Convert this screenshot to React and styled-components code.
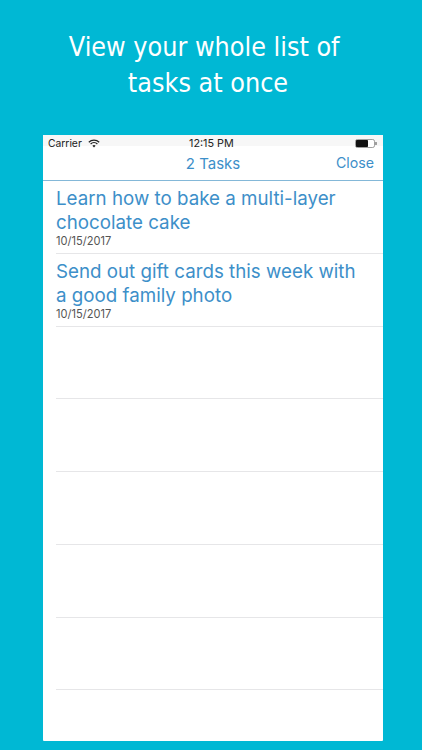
import React from "react";
import styled, { createGlobalStyle } from "styled-components";

const GlobalStyle = createGlobalStyle`
  html, body {
    margin: 0;
    padding: 0;
    background: #00b8d4;
  }
`;

const Page = styled.div`
  width: 422px;
  height: 750px;
  overflow: hidden;
  background: #00b8d4;
  display: flex;
  flex-direction: column;
`;

const Headline = styled.h1`
  margin: 0;
  padding: 29px 6px 0 0;
  height: 135px;
  box-sizing: border-box;
  width: 100%;
  flex: none;
  text-align: center;
  color: #fff;
  font-family: "DejaVu Sans Condensed", "DejaVu Sans", sans-serif;
  font-stretch: condensed;
  font-weight: 400;
  font-size: 26.7px;
  line-height: 36px;
  white-space: pre;
`;

const Phone = styled.div`
  width: 340px;
  height: 606px;
  margin-left: 43px;
  border-radius: 1px;
  background: #fff;
  display: flex;
  flex-direction: column;
  font-family: "Inter", sans-serif;
`;

const StatusBar = styled.div`
  height: 11px;
  flex: none;
  background: #f7f7f7;
  position: relative;
  color: #222;
  font-size: 10.3px;
`;

const Carrier = styled.span`
  position: absolute;
  left: 5px;
  top: 3px;
  display: flex;
  align-items: center;
  gap: 6px;
  line-height: 11px;
`;

const Clock = styled.span`
  position: absolute;
  left: 146px;
  top: 3px;
  line-height: 11px;
  font-size: 10.8px;
`;

const Battery = styled.svg`
  position: absolute;
  right: 6px;
  top: 4px;
`;

const NavBar = styled.div`
  height: 35px;
  flex: none;
  box-sizing: border-box;
  border-bottom: 1px solid #84b8d8;
  display: flex;
  align-items: center;
  justify-content: center;
  position: relative;
  color: #3d8fc9;
  font-size: 15px;
`;

const CloseButton = styled.span`
  position: absolute;
  right: 9px;
  top: 8px;
  line-height: 18px;
  font-size: 14.2px;
`;

const List = styled.div`
  display: flex;
  flex-direction: column;
  flex: 1;
`;

const Row = styled.div`
  height: 72.75px;
  flex: none;
  box-sizing: border-box;
  margin-left: 13px;
  padding-top: 6px;
  border-bottom: 1px solid #e6e6e8;
`;

const Title = styled.div`
  color: #3d8fc9;
  font-size: 18.75px;
  line-height: 24px;
`;

const DateLabel = styled.div`
  color: #555;
  font-size: 11.1px;
  line-height: 12px;
`;

const tasks = [
  { title: ["Learn how to bake a multi-layer", "chocolate cake"], date: "10/15/2017" },
  { title: ["Send out gift cards this week with", "a good family photo"], date: "10/15/2017" },
  null,
  null,
  null,
  null,
  null,
];

const WifiIcon = () => (
  <svg width="12" height="9" viewBox="0 0 12 9">
    <path d="M0.8 3.2 A7.4 7.4 0 0 1 11.2 3.2" fill="none" stroke="#222" strokeWidth="1.2" />
    <path d="M2.6 5 A4.9 4.9 0 0 1 9.4 5" fill="none" stroke="#222" strokeWidth="1.2" />
    <path d="M4.4 6.8 L6 8.6 L7.6 6.8 A2.4 2.4 0 0 0 4.4 6.8 Z" fill="#222" />
  </svg>
);

const App = () => (
  <Page>
    <GlobalStyle />
    <Headline>
      {"View your whole list of \n"}tasks at once
    </Headline>
    <Phone>
      <StatusBar>
        <Carrier>
          Carrier
          <WifiIcon />
        </Carrier>
        <Clock>12:15 PM</Clock>
        <Battery width="22" height="9" viewBox="0 0 22 9">
          <rect x="0.5" y="0.5" width="19" height="8" rx="1.8" fill="#fff" stroke="#777" strokeWidth="0.7" />
          <rect x="1" y="1" width="12" height="7" rx="0.8" fill="#111" />
          <rect x="20.3" y="3" width="1.4" height="3" rx="0.6" fill="#777" />
        </Battery>
      </StatusBar>
      <NavBar>
        2 Tasks
        <CloseButton>Close</CloseButton>
      </NavBar>
      <List>
        {tasks.map((task, i) => (
          <Row key={i}>
            {task && (
              <>
                <Title>
                  {task.title[0]}
                  <br />
                  {task.title[1]}
                </Title>
                <DateLabel>{task.date}</DateLabel>
              </>
            )}
          </Row>
        ))}
      </List>
    </Phone>
  </Page>
);

export default App;
